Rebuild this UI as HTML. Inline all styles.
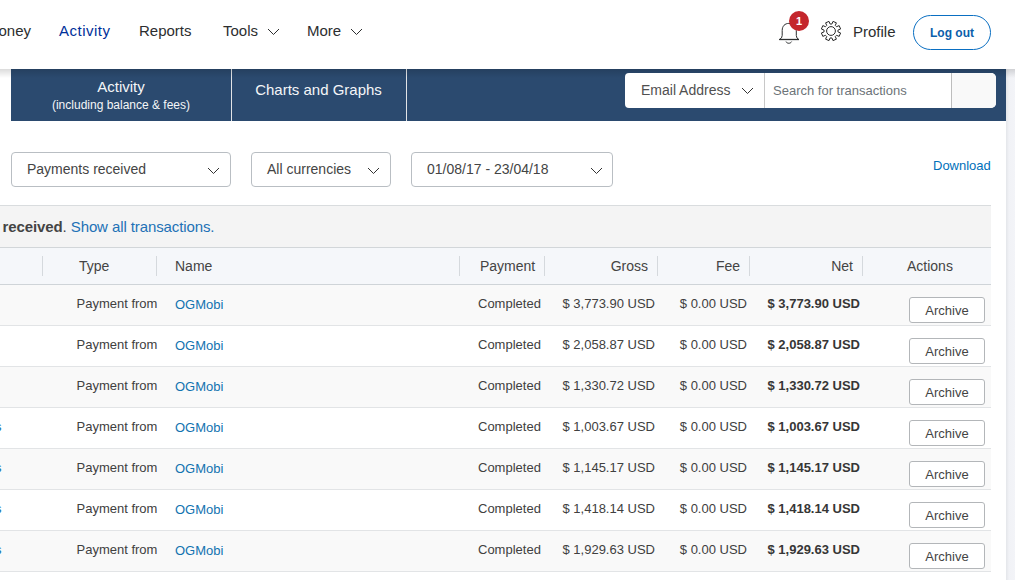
<!DOCTYPE html>
<html><head><meta charset="utf-8">
<style>
*{box-sizing:border-box}
html,body{margin:0;padding:0}
body{width:1015px;height:580px;overflow:hidden;position:relative;background:#fff;font-family:"Liberation Sans",sans-serif;color:#333}
.a{position:absolute;white-space:nowrap}
.nav{font-size:15px;color:#2c2e2f;top:22px;line-height:18px}
#shadow{position:absolute;left:0;top:69px;width:1015px;height:9px;background:linear-gradient(rgba(0,0,0,.14),rgba(0,0,0,0));z-index:50}
#band{position:absolute;left:11px;top:69px;width:995px;height:52px;background:#2b4a6f}
.tabdiv{position:absolute;top:0;width:1px;height:52px;background:#e2e4e7}
.tab{color:#f4f6f8;text-align:center}
#strip{position:absolute;left:1006px;top:69px;width:9px;height:511px;background:linear-gradient(90deg,#e4e6ea,#f1f2f6 3px,#f3f4f8)}
.sel{position:absolute;top:152px;height:35px;border:1px solid #b9bec3;border-radius:4px;background:#fff}
.sel span{position:absolute;left:15px;top:8px;font-size:14px;line-height:17px;color:#444}
.th{position:absolute;top:258px;font-size:14px;line-height:16px;color:#444}
.sep{position:absolute;top:256px;width:1px;height:20px;background:#d5d9dd}
.row{position:absolute;left:0;width:991px;height:41px;border-bottom:1px solid #e2e4e6}
.row .c{position:absolute;font-size:13px;line-height:15px;white-space:nowrap;color:#404040}
.row .lnk{color:#1273b0}
.row .b{font-weight:bold;color:#363636}
.arch{position:absolute;left:909px;top:12px;width:76px;height:25.5px;border:1px solid #b3b6b9;border-radius:3px;background:#fff;font-size:13px;text-align:center;line-height:25px;color:#444}
</style></head><body>

<!-- header -->
<div class="a nav" style="left:-14px">Money</div>
<div class="a nav" style="left:59px;color:#00309a;letter-spacing:0.5px">Activity</div>
<div class="a nav" style="left:139px">Reports</div>
<div class="a nav" style="left:223px">Tools</div>
<div class="a nav" style="left:307px">More</div>

<svg class="a" style="left:267.2px;top:28.1px" width="13" height="8" viewBox="0 0 13 8"><polyline points="1,1 6.5,6.5 12,1" fill="none" stroke="#2c2e2f" stroke-width="1"/></svg>
<svg class="a" style="left:349.5px;top:28.1px" width="13" height="8" viewBox="0 0 13 8"><polyline points="1,1 6.5,6.5 12,1" fill="none" stroke="#2c2e2f" stroke-width="1"/></svg>
<svg class="a" style="left:776px;top:18px" width="26" height="28" viewBox="0 0 26 28">
  <path d="M3.4 21.5 Q6.2 20.3 6.2 17.5 V12.5 C6.2 8 9 5.4 12.8 5.4 C16.6 5.4 20.3 8 20.3 12.5 V17.5 Q20.3 20.3 22.8 21.5 Z" fill="none" stroke="#2c2e2f" stroke-width="1" stroke-linejoin="round"/>
  <path d="M3.2 21.5 H23" stroke="#2c2e2f" stroke-width="1.3"/>
  <path d="M10 23.6 C11 25.8 14.6 25.8 15.6 23.6" fill="none" stroke="#2c2e2f" stroke-width="1"/>
</svg>
<div class="a" style="left:789px;top:10.5px;width:20px;height:20px;border-radius:10px;background:#c4262c;color:#fff;font-size:11px;font-weight:bold;text-align:center;line-height:20px">1</div>
<svg class="a" style="left:818.5px;top:19.2px" width="24" height="24" viewBox="0 0 24 24">
  <path fill="none" stroke="#2a2a2a" stroke-width="1" stroke-linejoin="round" d="M18.95 12.86 L21.60 13.97 L20.18 17.39 L17.52 16.31 L16.31 17.52 L17.39 20.18 L13.97 21.60 L12.86 18.95 L11.14 18.95 L10.03 21.60 L6.61 20.18 L7.69 17.52 L6.48 16.31 L3.82 17.39 L2.40 13.97 L5.05 12.86 L5.05 11.14 L2.40 10.03 L3.82 6.61 L6.48 7.69 L7.69 6.48 L6.61 3.82 L10.03 2.40 L11.14 5.05 L12.86 5.05 L13.97 2.40 L17.39 3.82 L16.31 6.48 L17.52 7.69 L20.18 6.61 L21.60 10.03 L18.95 11.14Z"/>
  <circle cx="12" cy="12" r="4.4" fill="none" stroke="#2a2a2a" stroke-width="1"/>
</svg>
<div class="a nav" style="left:853px;top:23px">Profile</div>
<div class="a" style="left:913px;top:15px;width:78px;height:35px;border:1.3px solid #0a6fc2;border-radius:17.5px;color:#0b5fab;font-weight:bold;font-size:12px;text-align:center;line-height:34px">Log out</div>

<!-- band -->
<div id="band">
  <div class="a tab" style="left:0;top:9px;width:220px;font-size:15px;line-height:17px">Activity</div>
  <div class="a tab" style="left:0;top:29px;width:220px;font-size:12px;line-height:14px">(including balance &amp; fees)</div>
  <div class="tabdiv" style="left:220px"></div>
  <div class="a tab" style="left:220px;top:12px;width:175px;font-size:15px;line-height:17px">Charts and Graphs</div>
  <div class="tabdiv" style="left:395px"></div>
  <div class="a" style="left:614px;top:4px;width:371px;height:35px;background:#fff;border-radius:4px 5px 5px 4px;overflow:hidden;z-index:60">
    <div class="a" style="left:16px;top:9px;font-size:14px;line-height:17px;color:#505050">Email Address</div>
    <div class="a" style="left:139px;top:0;width:1px;height:35px;background:#c8c8c8"></div>
    <div class="a" style="left:148px;top:10px;font-size:13px;line-height:16px;color:#6c7378">Search for transactions</div>
    <div class="a" style="left:326px;top:0;width:45px;height:35px;background:#f9f9f9;border-left:1px solid #bdbdbd"></div>
  </div>
</div>
<div id="strip"></div>
<div id="shadow"></div>

<!-- filters -->
<div class="sel" style="left:11px;width:220px"><span>Payments received</span></div>
<div class="sel" style="left:251px;width:140px"><span>All currencies</span></div>
<div class="sel" style="left:411px;width:202px"><span>01/08/17 - 23/04/18</span></div>
<svg class="a" style="left:206.5px;top:167px" width="13" height="8" viewBox="0 0 13 8"><polyline points="1,1 6.5,6.5 12,1" fill="none" stroke="#333" stroke-width="1"/></svg>
<svg class="a" style="left:366.5px;top:167px" width="13" height="8" viewBox="0 0 13 8"><polyline points="1,1 6.5,6.5 12,1" fill="none" stroke="#333" stroke-width="1"/></svg>
<svg class="a" style="left:589.5px;top:167px" width="13" height="8" viewBox="0 0 13 8"><polyline points="1,1 6.5,6.5 12,1" fill="none" stroke="#333" stroke-width="1"/></svg>
<svg class="a" style="z-index:61;left:740.8px;top:87px" width="13" height="8" viewBox="0 0 13 8"><polyline points="1,1 6.5,6.5 12,1" fill="none" stroke="#333" stroke-width="1"/></svg>
<div class="a" style="left:933px;top:158px;font-size:13px;line-height:15px;color:#0070ba">Download</div>

<!-- info bar -->
<div class="a" style="left:0;top:205px;width:991px;height:43px;background:#f4f4f4;border-top:1px solid #d9dcde;border-bottom:1px solid #d2d6d9"></div>
<div class="a" style="left:2.5px;top:218px;font-size:15px;line-height:17px;color:#444;letter-spacing:-0.1px"><b>received</b>. <span style="color:#2271b6">Show all transactions.</span></div>

<!-- table header -->
<div class="a" style="left:0;top:248px;width:991px;height:37px;background:#f5f7fa;border-bottom:1px solid #cfd4d8"></div>
<div class="sep" style="left:42px"></div>
<div class="sep" style="left:156px"></div>
<div class="sep" style="left:459px"></div>
<div class="sep" style="left:544px"></div>
<div class="sep" style="left:657px"></div>
<div class="sep" style="left:749px"></div>
<div class="sep" style="left:862px"></div>
<div class="th" style="left:79px">Type</div>
<div class="th" style="left:175px">Name</div>
<div class="th" style="left:480px">Payment</div>
<div class="th" style="right:367px">Gross</div>
<div class="th" style="right:275px">Fee</div>
<div class="th" style="right:162px">Net</div>
<div class="th" style="left:907px">Actions</div>

<div id="rows">
<div class="row" style="top:285px;background:#f9f9f9"><div class="c" style="left:76.5px;top:10.5px">Payment from</div><div class="c lnk" style="left:175px;top:11.5px">OGMobi</div><div class="c" style="left:478px;top:11px">Completed</div><div class="c" style="right:336px;top:11px">$ 3,773.90 USD</div><div class="c" style="right:244px;top:11px">$ 0.00 USD</div><div class="c b" style="right:131px;top:11px">$ 3,773.90 USD</div><div class="arch">Archive</div></div>
<div class="row" style="top:326px;background:#fff"><div class="c" style="left:76.5px;top:10.5px">Payment from</div><div class="c lnk" style="left:175px;top:11.5px">OGMobi</div><div class="c" style="left:478px;top:11px">Completed</div><div class="c" style="right:336px;top:11px">$ 2,058.87 USD</div><div class="c" style="right:244px;top:11px">$ 0.00 USD</div><div class="c b" style="right:131px;top:11px">$ 2,058.87 USD</div><div class="arch">Archive</div></div>
<div class="row" style="top:367px;background:#f9f9f9"><div class="c" style="left:76.5px;top:10.5px">Payment from</div><div class="c lnk" style="left:175px;top:11.5px">OGMobi</div><div class="c" style="left:478px;top:11px">Completed</div><div class="c" style="right:336px;top:11px">$ 1,330.72 USD</div><div class="c" style="right:244px;top:11px">$ 0.00 USD</div><div class="c b" style="right:131px;top:11px">$ 1,330.72 USD</div><div class="arch">Archive</div></div>
<div class="row" style="top:408px;background:#fff"><div class="c lnk" style="left:-5px;top:11px">s</div><div class="c" style="left:76.5px;top:10.5px">Payment from</div><div class="c lnk" style="left:175px;top:11.5px">OGMobi</div><div class="c" style="left:478px;top:11px">Completed</div><div class="c" style="right:336px;top:11px">$ 1,003.67 USD</div><div class="c" style="right:244px;top:11px">$ 0.00 USD</div><div class="c b" style="right:131px;top:11px">$ 1,003.67 USD</div><div class="arch">Archive</div></div>
<div class="row" style="top:449px;background:#f9f9f9"><div class="c lnk" style="left:-5px;top:11px">s</div><div class="c" style="left:76.5px;top:10.5px">Payment from</div><div class="c lnk" style="left:175px;top:11.5px">OGMobi</div><div class="c" style="left:478px;top:11px">Completed</div><div class="c" style="right:336px;top:11px">$ 1,145.17 USD</div><div class="c" style="right:244px;top:11px">$ 0.00 USD</div><div class="c b" style="right:131px;top:11px">$ 1,145.17 USD</div><div class="arch">Archive</div></div>
<div class="row" style="top:490px;background:#fff"><div class="c lnk" style="left:-5px;top:11px">s</div><div class="c" style="left:76.5px;top:10.5px">Payment from</div><div class="c lnk" style="left:175px;top:11.5px">OGMobi</div><div class="c" style="left:478px;top:11px">Completed</div><div class="c" style="right:336px;top:11px">$ 1,418.14 USD</div><div class="c" style="right:244px;top:11px">$ 0.00 USD</div><div class="c b" style="right:131px;top:11px">$ 1,418.14 USD</div><div class="arch">Archive</div></div>
<div class="row" style="top:531px;background:#f9f9f9"><div class="c lnk" style="left:-5px;top:11px">s</div><div class="c" style="left:76.5px;top:10.5px">Payment from</div><div class="c lnk" style="left:175px;top:11.5px">OGMobi</div><div class="c" style="left:478px;top:11px">Completed</div><div class="c" style="right:336px;top:11px">$ 1,929.63 USD</div><div class="c" style="right:244px;top:11px">$ 0.00 USD</div><div class="c b" style="right:131px;top:11px">$ 1,929.63 USD</div><div class="arch">Archive</div></div>
</div>
</body></html>
